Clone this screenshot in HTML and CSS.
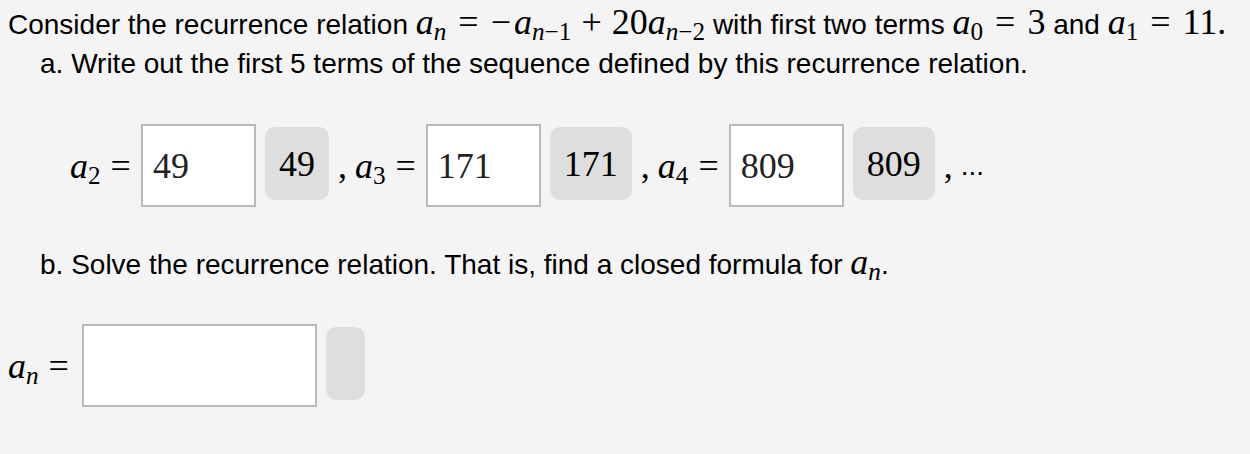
FILE: index.html
```html
<!DOCTYPE html>
<html lang="en">
<head>
    <meta charset="UTF-8">
    <meta name="viewport" content="width=device-width, initial-scale=1.0">
    <title>Recurrence relation</title>
    <link rel="stylesheet" href="styles.css">
</head>
<body>
    <p class="intro">Consider the recurrence relation <span class="m"><i>a</i><sub><i>n</i></sub><span class="rel">=</span><span class="neg">&minus;</span><i>a</i><sub><i>n</i>&minus;1</sub><span class="bin">+</span>20<i>a</i><sub><i>n</i>&minus;2</sub></span> with first two terms <span class="m"><i>a</i><sub>0</sub><span class="rel">=</span>3</span> and <span class="m"><i>a</i><sub>1</sub><span class="rel">=</span>11.</span></p>

    <p class="step step-a">a. Write out the first 5 terms of the sequence defined by this recurrence relation.</p>

    <div class="row row-a">
        <span class="m label"><i>a</i><sub>2</sub><span class="rel">=</span></span>
        <input class="answer" type="text" value="49">
        <span class="check m">49</span>
        <span class="m sep">,</span>
        <span class="m label"><i>a</i><sub>3</sub><span class="rel">=</span></span>
        <input class="answer" type="text" value="171">
        <span class="check m">171</span>
        <span class="m sep">,</span>
        <span class="m label"><i>a</i><sub>4</sub><span class="rel">=</span></span>
        <input class="answer" type="text" value="809">
        <span class="check m">809</span>
        <span class="m sep">,</span>
        <span class="dots">...</span>
    </div>

    <p class="step step-b">b. Solve the recurrence relation. That is, find a closed formula for <span class="m"><i>a</i><sub><i>n</i></sub></span>.</p>

    <div class="row row-b">
        <span class="m label"><i>a</i><sub><i>n</i></sub><span class="rel">=</span></span>
        <input class="answer wide" type="text" value="">
        <span class="check m"></span>
    </div>
</body>
</html>
```

FILE: styles.css
```css
body {
    margin: 8px;
    background-color: #f4f4f4;
    color: #000;
    font-family: 'Liberation Sans', Arial, sans-serif;
    font-size: 28px;
}
p {
    margin: 0;
    line-height: 32px;
}
p .m {
    line-height: 24px;
}
.intro {
    padding-top: 1px;
}
.step {
    padding-left: 32px;
}
.step-a {
    margin-top: 7px;
}
.step-b {
    margin-top: 42px;
}
.m {
    font-family: 'Liberation Serif', 'Times New Roman', serif;
    font-size: 36px;
    line-height: 1;
    white-space: nowrap;
}
.m i {
    font-style: italic;
}
.m sub {
    font-size: 0.7em;
    vertical-align: -0.25em;
    line-height: 0;
}
.rel {
    margin: 0 12px;
}
.bin {
    margin: 0 10px;
}
.neg {
    margin-right: 3px;
}
.row {
    display: flex;
    align-items: center;
}
.row-a {
    margin-top: 44px;
    padding-left: 62px;
}
.row-b {
    margin-top: 43px;
}
.row .rel {
    margin: 0 10px;
}
.row-b .label {
    margin-right: 3px;
}
.answer {
    box-sizing: border-box;
    width: 115px;
    height: 83px;
    margin: 0;
    padding: 0 10px;
    border: 2px solid #bababa;
    background-color: #fff;
    font-family: 'Liberation Serif', 'Times New Roman', serif;
    font-size: 36px;
    color: #222;
    outline: none;
}
.answer.wide {
    width: 235px;
}
.check {
    box-sizing: border-box;
    min-width: 39px;
    height: 73px;
    margin: 0 0 4px 9px;
    padding: 0 14px;
    display: flex;
    align-items: center;
    justify-content: center;
    background-color: #dedede;
    border-radius: 10px;
}
.sep {
    margin-left: 9px;
    margin-right: 8px;
}
.dots {
    font-size: 28px;
}
```
